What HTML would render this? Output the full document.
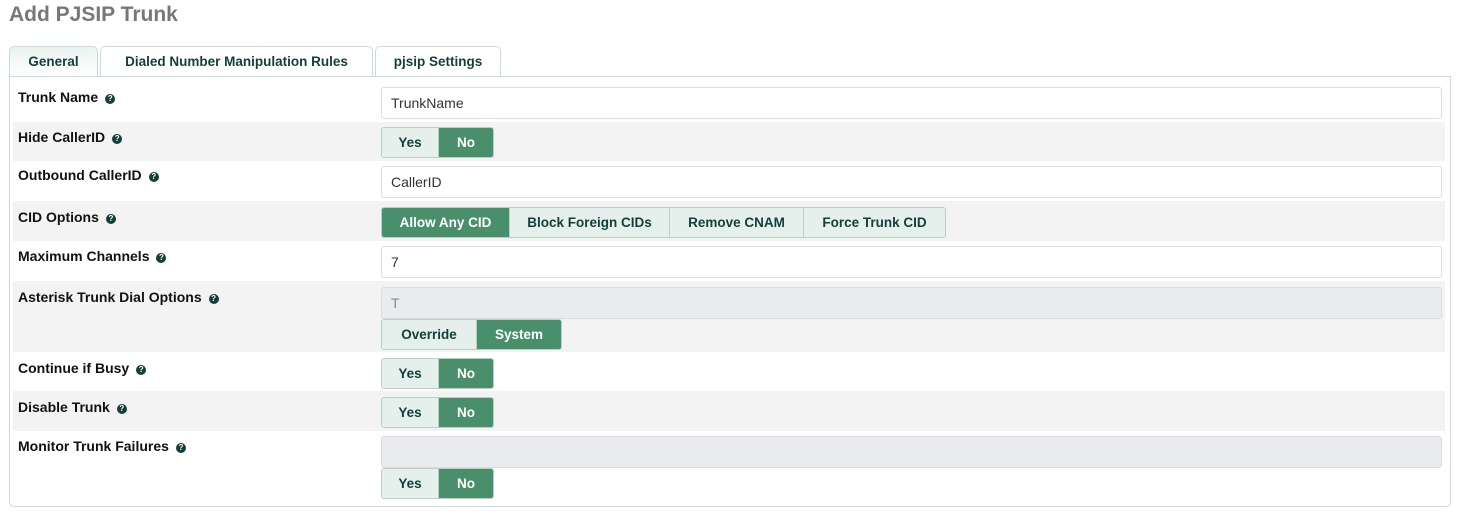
<!DOCTYPE html>
<html><head><style>
body{margin:0;background:#fff;font-family:"Liberation Sans",sans-serif;width:1460px;height:518px;overflow:hidden;position:relative}
h1{position:absolute;left:9px;top:3px;margin:0;font-size:21px;color:#777;font-weight:bold}
.tab{position:absolute;top:46px;height:30px;border:1px solid #c9ddd6;border-bottom:none;border-radius:5px 5px 0 0;background:#fff;font-size:13.5px;font-weight:bold;color:#123f3a;text-align:center;line-height:30px;box-sizing:border-box}
.panel{position:absolute;left:9px;top:76px;width:1442px;height:431px;border:1px solid #c9ddd6;border-radius:0 0 5px 5px;box-sizing:border-box}
.row{position:absolute;left:13px;width:1432px}
.g{background:#f3f3f3}
.lab{position:absolute;left:5px;font-size:14px;font-weight:bold;color:#111}
.q{display:inline-block;width:10px;height:10px;border-radius:50%;background:#123f3a;color:#fff;font-size:8px;line-height:10px;text-align:center;margin-left:7px;vertical-align:1px}
.inp{position:absolute;left:368px;width:1061px;height:32px;border:1px solid #ddd;border-radius:3px;background:#fff;box-sizing:border-box;font-size:14px;color:#333;line-height:30px;padding-left:9px}
.dis{background:#e9ebee;color:#888}
.bg{position:absolute;left:368px;height:31px;display:flex;border:1px solid #b9d0c6;border-radius:3px;overflow:hidden;box-sizing:border-box}
.bg span{display:block;background:#e5f0ec;color:#123f3a;font-size:13.5px;font-weight:bold;line-height:29px;text-align:center;border-right:1px solid #b9d0c6}
.bg span:last-child{border-right:none}
.bg span.on{background:#4a8f6c;color:#fff}
</style></head><body>
<h1>Add PJSIP Trunk</h1>
<div class="tab" style="left:9px;width:89px;background:linear-gradient(#eaf3ef,#fff)">General</div>
<div class="tab" style="left:100px;width:273px">Dialed Number Manipulation Rules</div>
<div class="tab" style="left:375px;width:126px">pjsip Settings</div>
<div class="panel"></div>

<div class="row" style="top:77px;height:44px"><div class="lab" style="top:12px">Trunk Name<span class="q">?</span></div><div class="inp" style="top:10px">TrunkName</div></div>
<div class="row g" style="top:122px;height:39px"><div class="lab" style="top:7px">Hide CallerID<span class="q">?</span></div><div class="bg" style="top:5px"><span style="width:56px">Yes</span><span class="on" style="width:54px">No</span></div></div>
<div class="row" style="top:161px;height:40px"><div class="lab" style="top:6px">Outbound CallerID<span class="q">?</span></div><div class="inp" style="top:5px">CallerID</div></div>
<div class="row g" style="top:201px;height:40px"><div class="lab" style="top:8px">CID Options<span class="q">?</span></div><div class="bg" style="top:6px"><span class="on" style="width:127px">Allow Any CID</span><span style="width:159px">Block Foreign CIDs</span><span style="width:133px">Remove CNAM</span><span style="width:141px">Force Trunk CID</span></div></div>
<div class="row" style="top:241px;height:40px"><div class="lab" style="top:7px">Maximum Channels<span class="q">?</span></div><div class="inp" style="top:5px">7</div></div>
<div class="row g" style="top:281px;height:71px"><div class="lab" style="top:8px">Asterisk Trunk Dial Options<span class="q">?</span></div><div class="inp dis" style="top:6px">T</div><div class="bg" style="top:38px"><span style="width:94px">Override</span><span class="on" style="width:84px">System</span></div></div>
<div class="row" style="top:352px;height:39px"><div class="lab" style="top:8px">Continue if Busy<span class="q">?</span></div><div class="bg" style="top:6px"><span style="width:56px">Yes</span><span class="on" style="width:54px">No</span></div></div>
<div class="row g" style="top:391px;height:40px"><div class="lab" style="top:8px">Disable Trunk<span class="q">?</span></div><div class="bg" style="top:6px"><span style="width:56px">Yes</span><span class="on" style="width:54px">No</span></div></div>
<div class="row" style="top:431px;height:70px"><div class="lab" style="top:7px">Monitor Trunk Failures<span class="q">?</span></div><div class="inp dis" style="top:5px"></div><div class="bg" style="top:37px"><span style="width:56px">Yes</span><span class="on" style="width:54px">No</span></div></div>
</body></html>
